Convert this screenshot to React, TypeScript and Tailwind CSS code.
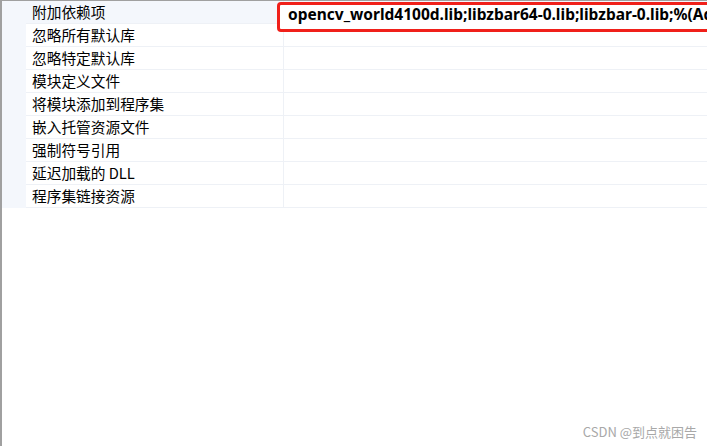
import React from 'react';

const rows = [
  '附加依赖项',
  '忽略所有默认库',
  '忽略特定默认库',
  '模块定义文件',
  '将模块添加到程序集',
  '嵌入托管资源文件',
  '强制符号引用',
  '延迟加载的 DLL',
  '程序集链接资源',
];

export default function App() {
  return (
    <div
      className="relative w-[707px] h-[446px] bg-white border-l-2 border-t border-[#a0a0a0] overflow-hidden text-black"
      style={{ fontFamily: '"Microsoft YaHei", "Noto Sans CJK SC", "Noto Sans", sans-serif' }}
    >
      <div className="flex flex-col">
        {rows.map((name, i) => (
          <div key={name} className={`flex h-[23px] ${i === 0 ? 'bg-[#f4f7fc]' : ''}`}>
            <div className="w-[24px] shrink-0 bg-[#f4f7fc]" />
            <div className="w-[258px] shrink-0 border-b border-r border-[#eef1f6] pl-[6px] flex items-center text-[14.7px] leading-none whitespace-nowrap">
              {name}
            </div>
            <div className="flex-1 border-b border-[#eef1f6]" />
          </div>
        ))}
      </div>

      {/* highlighted value */}
      <div className="absolute left-[275px] top-[1px] w-[445px] h-[30px] border-[3px] border-[#f0201a] rounded-[4px] bg-white flex items-center pl-[8px] pb-[4px] overflow-hidden">
        <span
          className="text-[15.5px] font-bold whitespace-nowrap"
          style={{ fontFamily: '"Noto Sans", "Open Sans", sans-serif' }}
        >
          opencv_world4100d.lib;libzbar64-0.lib;libzbar-0.lib;%(Ad
        </span>
      </div>

      <div className="absolute right-[10px] bottom-[5px] text-[13px] text-[#a8a8a8]">CSDN @到点就困告</div>
    </div>
  );
}
